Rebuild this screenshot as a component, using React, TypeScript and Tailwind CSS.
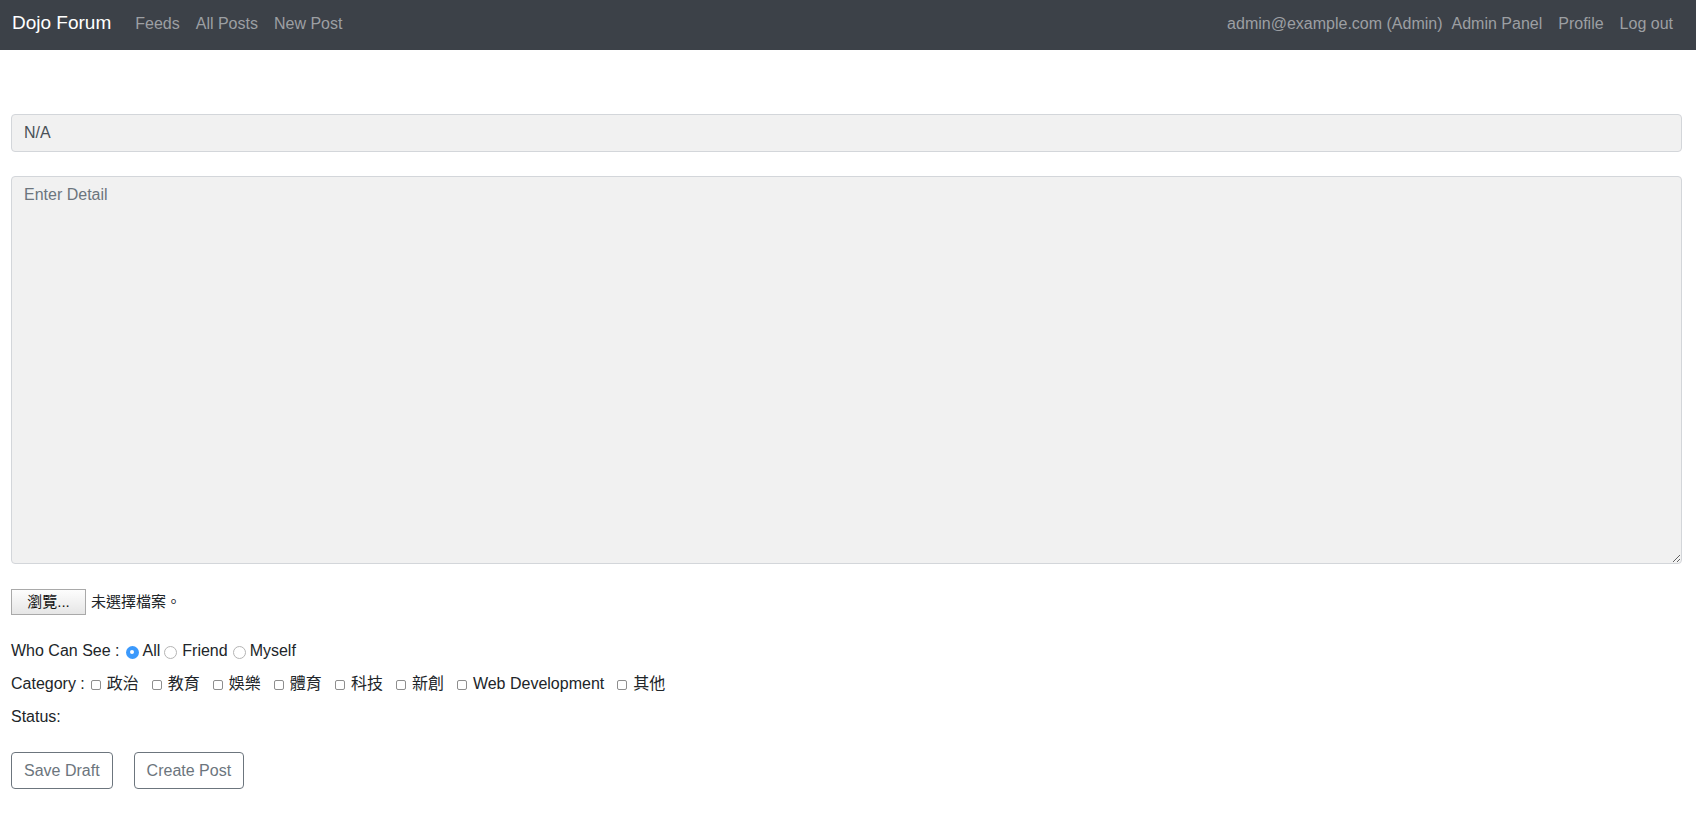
import React from "react";

const FONT = { fontFamily: '"Liberation Sans", "Noto Sans CJK TC", Arial, sans-serif' };

const categories = ["政治", "教育", "娛樂", "體育", "科技", "新創", "Web Development", "其他"];

function Radio({ checked, className = "" }: { checked?: boolean; className?: string }) {
  if (checked) {
    return (
      <span className={"flex h-[13px] w-[13px] shrink-0 items-center justify-center rounded-full bg-[#3b99fc] " + className}>
        <span className="h-[4px] w-[4px] rounded-full bg-white" />
      </span>
    );
  }
  return <span className={"block h-[13px] w-[13px] shrink-0 rounded-full border border-[#b4b4b4] bg-white " + className} />;
}

export default function App() {
  return (
    <div className="min-h-screen bg-white text-[16px] text-[#212529]" style={FONT}>
      {/* navbar */}
      <nav className="flex h-[50px] items-center justify-between bg-[#3c4148] pb-[3px] pl-3 pr-[15px]">
        <div className="flex items-center">
          <a className="mr-4 text-[19px] text-white">Dojo Forum</a>
          <a className="px-2 text-[#9c9fa3]">Feeds</a>
          <a className="px-2 text-[#9c9fa3]">All Posts</a>
          <a className="px-2 text-[#9c9fa3]">New Post</a>
        </div>
        <div className="flex items-center text-[#9c9fa3]">
          <span className="mr-px">admin@example.com (Admin)</span>
          <a className="px-2">Admin Panel</a>
          <a className="px-2">Profile</a>
          <a className="px-2">Log out</a>
        </div>
      </nav>

      <div className="ml-[11px] mr-[14px] pt-[64px]">
        <input
          readOnly
          value="N/A"
          className="block h-[38px] w-full rounded border border-[#d3d6da] bg-[#f1f1f1] px-3 text-[#495057] outline-none"
        />
        <textarea
          placeholder="Enter Detail"
          className="mt-6 block h-[388px] w-full rounded border border-[#d3d6da] bg-[#f1f1f1] px-3 py-[6px] leading-6 text-[#495057] outline-none placeholder:text-[#6c757d]"
        />

        {/* file picker */}
        <div className="mt-[25px] flex h-[26px] items-center text-[15px]">
          <span className="flex h-[26px] w-[75px] items-center justify-center border border-[#a9a9a9] bg-gradient-to-b from-[#fdfdfd] to-[#e6e6e6] text-[#111]">
            瀏覽...
          </span>
          <span className="ml-[5px]">未選擇檔案。</span>
        </div>

        <div className="mt-6 flex h-6 items-center">
          <span>Who Can See :</span>
          <Radio checked className="ml-[6px] mt-[2px]" />
          <span className="ml-[4px]">All</span>
          <Radio className="ml-[4px] mt-[2px]" />
          <span className="ml-[5px]">Friend</span>
          <Radio className="ml-[5px] mt-[2px]" />
          <span className="ml-[4px]">Myself</span>
        </div>

        <div className="mt-[9px] flex h-6 items-center">
          <span className="mr-[6px]">Category :</span>
          {categories.map((c) => (
            <span key={c} className="flex items-center">
              <span className="mt-px inline-block h-[10px] w-[10px] rounded-[2px] border border-[#8e8e8e] bg-white" />
              <span className="ml-[6px] mr-[13px]">{c}</span>
            </span>
          ))}
        </div>

        <div className="mt-[9px] h-6 leading-6">Status:</div>

        <div className="mt-[23px] flex gap-[21px]">
          <button className="h-[37px] rounded border border-[#6c757d] px-[12px] text-[#6c757d]">Save Draft</button>
          <button className="h-[37px] rounded border border-[#6c757d] px-[12px] text-[#6c757d]">Create Post</button>
        </div>
      </div>
    </div>
  );
}
